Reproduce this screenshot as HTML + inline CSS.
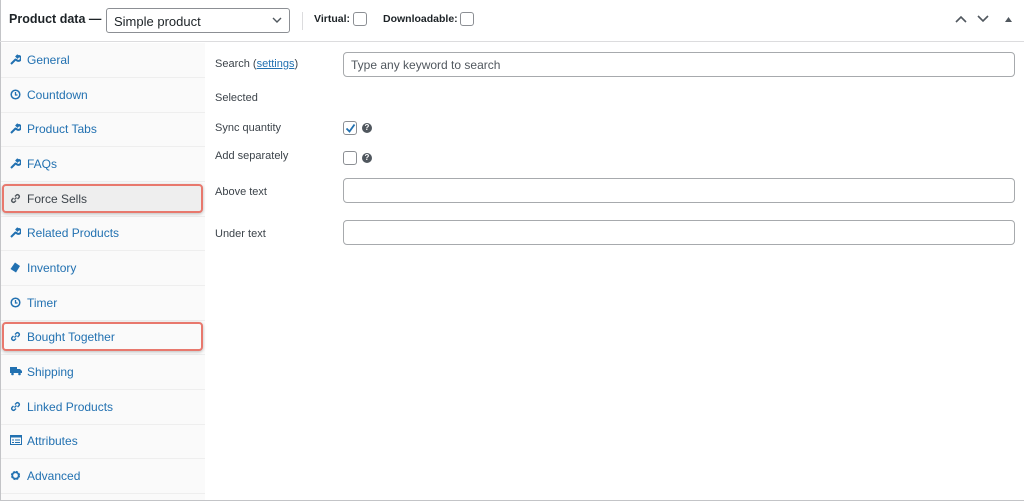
<!DOCTYPE html>
<html><head><meta charset="utf-8"><style>
*{box-sizing:border-box;margin:0;padding:0}
body{width:1024px;height:502px;background:#fff;font-family:"Liberation Sans",sans-serif;position:relative;overflow:hidden;color:#3c434a}
.frame{position:absolute;left:0;top:0;width:1024px;height:501px;border-left:1px solid #c3c4c7;border-bottom:1px solid #c3c4c7}
.hdr{position:absolute;left:0;top:0;width:1024px;height:42px;border-bottom:1px solid #dcdcde}
.t{position:absolute;font-size:13px;white-space:nowrap}
.sel{position:absolute;left:106px;top:8px;width:184px;height:25px;border:1px solid #8c8f94;border-radius:3px;font-size:13px;padding:5px 0 0 7px;color:#1d2327}
.cb{position:absolute;width:14px;height:14px;border:1px solid #8c8f94;border-radius:3px;background:#fff}
.side{position:absolute;left:1px;top:43px;width:204px;height:457px;background:#fafafa}
.it{position:absolute;left:0;width:204px;height:35px;border-bottom:1px solid #eee;color:#2271b1;font-size:12px}
.it span{position:absolute;left:26px;top:10px}
.it svg{position:absolute;left:9px;top:11px}
.hl{position:absolute;left:2px;width:201px;height:29px;border:2px solid #e8786d;border-radius:4px;box-shadow:0 1px 3px rgba(0,0,0,.25)}
.lab{position:absolute;left:215px;font-size:11px;color:#3c434a}
.inp{position:absolute;left:343px;width:672px;height:25px;border:1px solid #a7aaad;border-radius:4px;font-size:12px;color:#50575e;padding:5px 0 0 7px}
.q{position:absolute;width:10px;height:10px;border-radius:50%;background:#50575e;color:#fff;font-size:8px;font-weight:bold;text-align:center;line-height:10px}
</style></head><body>
<div class="frame"></div>
<div class="hdr"></div>
<div class="t" style="left:9px;top:12px;font-weight:bold;font-size:12.5px;color:#1d2327">Product data —</div>
<div class="sel">Simple product
<svg style="position:absolute;right:7px;top:8px" width="10" height="7" viewBox="0 0 10 7"><path d="M1 1l4 4 4-4" fill="none" stroke="#50575e" stroke-width="1.4"/></svg></div>
<div style="position:absolute;left:302px;top:12px;width:1px;height:18px;background:#dcdcde"></div>
<div class="t" style="left:314px;top:13px;font-size:10.5px;font-weight:bold;color:#1d2327">Virtual:</div>
<div class="cb" style="left:353px;top:12px"></div>
<div class="t" style="left:383px;top:13px;font-size:10.5px;font-weight:bold;color:#1d2327">Downloadable:</div>
<div class="cb" style="left:460px;top:12px"></div>
<svg style="position:absolute;left:955px;top:15px" width="12" height="8" viewBox="0 0 12 8"><path d="M1 7l5-5 5 5" fill="none" stroke="#50575e" stroke-width="1.6"/></svg>
<svg style="position:absolute;left:977px;top:15px" width="12" height="8" viewBox="0 0 12 8"><path d="M1 1l5 5 5-5" fill="none" stroke="#50575e" stroke-width="1.6"/></svg>
<svg style="position:absolute;left:1005px;top:17px" width="7" height="5" viewBox="0 0 7 5"><path d="M0 5L3.5 0 7 5z" fill="#50575e"/></svg>

<div class="side">
<div class="it" style="top:0"><svg width="11" height="11" viewBox="0 0 11 11"><path d="M1 10l5-5M6 5a2.5 2.5 0 1 0 3-3l-1.5 1.5-1-1L8 1" stroke="#2271b1" stroke-width="2" fill="none"/></svg><span>General</span></div>
<div class="it" style="top:35px"><svg width="11" height="11" viewBox="0 0 11 11"><circle cx="5.5" cy="5.5" r="4.3" stroke="#2271b1" stroke-width="1.5" fill="none"/><path d="M5.5 3v3h2" stroke="#2271b1" stroke-width="1.3" fill="none"/></svg><span>Countdown</span></div>
<div class="it" style="top:69px"><svg width="11" height="11" viewBox="0 0 11 11"><path d="M1 10l5-5M6 5a2.5 2.5 0 1 0 3-3l-1.5 1.5-1-1L8 1" stroke="#2271b1" stroke-width="2" fill="none"/></svg><span>Product Tabs</span></div>
<div class="it" style="top:104px"><svg width="11" height="11" viewBox="0 0 11 11"><path d="M1 10l5-5M6 5a2.5 2.5 0 1 0 3-3l-1.5 1.5-1-1L8 1" stroke="#2271b1" stroke-width="2" fill="none"/></svg><span>FAQs</span></div>
<div class="it" style="top:139px"></div>
<div class="it" style="top:173px"><svg width="11" height="11" viewBox="0 0 11 11"><path d="M1 10l5-5M6 5a2.5 2.5 0 1 0 3-3l-1.5 1.5-1-1L8 1" stroke="#2271b1" stroke-width="2" fill="none"/></svg><span>Related Products</span></div>
<div class="it" style="top:208px"><svg width="11" height="11" viewBox="0 0 11 11"><path d="M5 0.5l5 3.5-4 6.5-5.5-3.5z" fill="#2271b1"/></svg><span>Inventory</span></div>
<div class="it" style="top:243px"><svg width="11" height="11" viewBox="0 0 11 11"><circle cx="5.5" cy="5.5" r="4.3" stroke="#2271b1" stroke-width="1.5" fill="none"/><path d="M5.5 3v3h2" stroke="#2271b1" stroke-width="1.3" fill="none"/></svg><span>Timer</span></div>
<div class="it" style="top:277px"></div>
<div class="it" style="top:312px"><svg width="12" height="10" viewBox="0 0 12 10"><path d="M0 1h7v6H0zM7 3h3l2 2v2H7z" fill="#2271b1"/><circle cx="2.5" cy="8" r="1.3" fill="#2271b1"/><circle cx="9.5" cy="8" r="1.3" fill="#2271b1"/></svg><span>Shipping</span></div>
<div class="it" style="top:347px"><svg width="11" height="11" viewBox="0 0 11 11"><path d="M4.5 6.5l2-2M3.5 5l-1.5 1.5a1.8 1.8 0 0 0 2.5 2.5L6 7.5M7.5 6L9 4.5A1.8 1.8 0 0 0 6.5 2L5 3.5" stroke="#2271b1" stroke-width="1.4" fill="none"/></svg><span>Linked Products</span></div>
<div class="it" style="top:381px"><svg width="12" height="10" viewBox="0 0 12 10"><rect x="0.5" y="0.5" width="11" height="9" fill="none" stroke="#2271b1"/><rect x="0.5" y="0.5" width="11" height="2" fill="#2271b1"/><path d="M2 5h2M5 5h5M2 7.5h2M5 7.5h5" stroke="#2271b1"/></svg><span>Attributes</span></div>
<div class="it" style="top:416px"><svg width="11" height="11" viewBox="0 0 11 11"><circle cx="5.5" cy="5.5" r="3.5" fill="none" stroke="#2271b1" stroke-width="2.2" stroke-dasharray="1.8 1"/><circle cx="5.5" cy="5.5" r="3.2" fill="none" stroke="#2271b1" stroke-width="1.6"/></svg><span>Advanced</span></div>
</div>
<div class="hl" style="top:184px;background:#eee"><svg style="position:absolute;left:6px;top:7px" width="11" height="11" viewBox="0 0 11 11"><path d="M4.5 6.5l2-2M3.5 5l-1.5 1.5a1.8 1.8 0 0 0 2.5 2.5L6 7.5M7.5 6L9 4.5A1.8 1.8 0 0 0 6.5 2L5 3.5" stroke="#50575e" stroke-width="1.4" fill="none"/></svg><span style="position:absolute;left:23px;top:6px;font-size:12px;color:#3c434a">Force Sells</span></div>
<div class="hl" style="top:322px;background:#fafafa"><svg style="position:absolute;left:6px;top:7px" width="11" height="11" viewBox="0 0 11 11"><path d="M4.5 6.5l2-2M3.5 5l-1.5 1.5a1.8 1.8 0 0 0 2.5 2.5L6 7.5M7.5 6L9 4.5A1.8 1.8 0 0 0 6.5 2L5 3.5" stroke="#2271b1" stroke-width="1.4" fill="none"/></svg><span style="position:absolute;left:23px;top:6px;font-size:12px;color:#2271b1">Bought Together</span></div>

<div class="lab" style="top:58px">Search (<span style="color:#2271b1;text-decoration:underline">settings</span>)</div>
<div class="inp" style="top:52px">Type any keyword to search</div>
<div class="lab" style="top:92px">Selected</div>
<div class="lab" style="top:122px">Sync quantity</div>
<div class="cb" style="left:343px;top:121px"><svg style="position:absolute;left:0;top:0" width="13" height="13" viewBox="0 0 13 13"><path d="M2.5 6.5l3 3 5-7" stroke="#2271b1" stroke-width="1.8" fill="none"/></svg></div>
<div class="q" style="left:362px;top:123px">?</div>
<div class="lab" style="top:150px">Add separately</div>
<div class="cb" style="left:343px;top:151px"></div>
<div class="q" style="left:362px;top:153px">?</div>
<div class="lab" style="top:186px">Above text</div>
<div class="inp" style="top:178px"></div>
<div class="lab" style="top:228px">Under text</div>
<div class="inp" style="top:220px"></div>
</body></html>
